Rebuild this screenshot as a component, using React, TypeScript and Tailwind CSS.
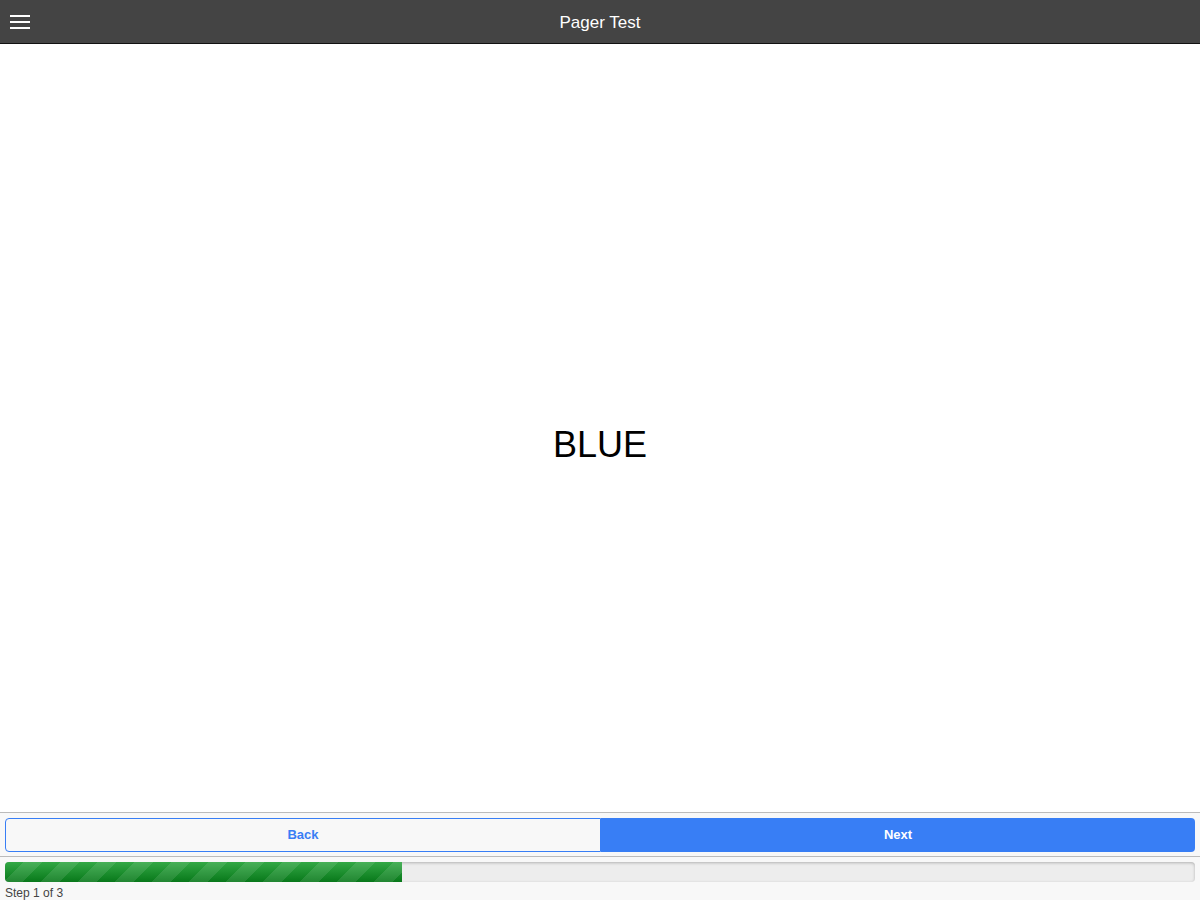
import React from 'react';

const steps = ['BLUE', 'RED', 'GREEN'];

function MenuIcon() {
    return (
        <svg width="20" height="14" viewBox="0 0 20 14" className="block">
            <rect x="0" y="0" width="20" height="2" fill="#fff" />
            <rect x="0" y="6" width="20" height="2" fill="#fff" />
            <rect x="0" y="12" width="20" height="2" fill="#fff" />
        </svg>
    );
}

export default function App() {
    const [step] = React.useState(0);
    const pct = ((step + 1) / steps.length) * 100;

    return (
        <div className="flex h-[900px] w-full flex-col bg-white font-['Liberation_Sans',Arial,sans-serif]">
            {/* Header */}
            <header className="relative flex h-[44px] shrink-0 items-center justify-center border-b border-[#111] bg-[#444444] pt-[2px]">
                <button className="absolute left-[10px] top-[15px]">
                    <MenuIcon />
                </button>
                <h1 className="text-[17px] text-white">Pager Test</h1>
            </header>

            {/* Content */}
            <main className="flex flex-1 items-center justify-center pt-[34px]">
                <span className="text-[36px] text-black">{steps[step]}</span>
            </main>

            {/* Footer */}
            <footer className="shrink-0 border-t border-[#bbbbbb] bg-[#f8f8f8]">
                <div className="flex h-[34px] px-[5px] mt-[5px] mb-[4px]">
                    <button className="flex flex-1 items-center justify-center rounded-l-[4px] border border-[#387ef5] bg-[#f8f8f8] text-[13px] font-bold text-[#387ef5]">
                        Back
                    </button>
                    <button className="flex flex-1 items-center justify-center rounded-r-[4px] bg-[#387ef5] text-[13px] font-bold text-white">
                        Next
                    </button>
                </div>
                <div className="border-t border-[#bbbbbb] px-[5px] pt-[5px]">
                    <div className="h-[20px] overflow-hidden rounded-[4px] bg-[#ededed] shadow-[inset_0_1px_3px_rgba(0,0,0,0.25)]">
                        <div
                            className="h-full bg-[linear-gradient(-45deg,rgba(255,255,255,0.1)_25%,transparent_25%,transparent_50%,rgba(255,255,255,0.1)_50%,rgba(255,255,255,0.1)_75%,transparent_75%,transparent),linear-gradient(to_bottom,#33a845,#08781a)] bg-[length:37px_37px,100%_100%]"
                            style={{ width: `${pct}%` }}
                        />
                    </div>
                    <div className="h-[18px] pt-[4px] text-[12px] leading-[14px] text-[#444]">
                        Step {step + 1} of {steps.length}
                    </div>
                </div>
            </footer>
        </div>
    );
}
